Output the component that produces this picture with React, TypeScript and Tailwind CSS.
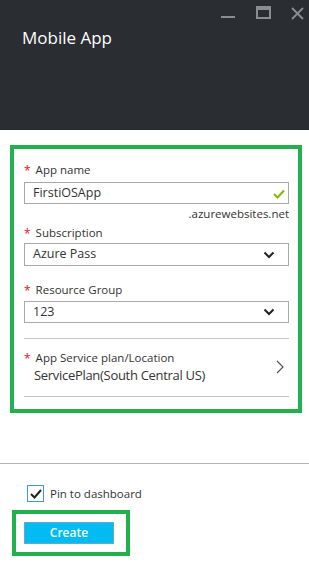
import React from "react";

const font = { fontFamily: '"Segoe UI", "Open Sans", "Noto Sans", sans-serif' };

function Star() {
  return <span className="text-[#e81123] text-[12px] mr-[5px] relative top-[1px]">*</span>;
}

function ChevronDown() {
  return (
    <svg width="12" height="8" viewBox="0 0 12 8" className="absolute right-[13px] top-1/2 -translate-y-1/2">
      <path d="M1.5 1.5 L6 6 L10.5 1.5" fill="none" stroke="#222" strokeWidth="2" />
    </svg>
  );
}

export default function App() {
  return (
    <div className="w-[309px] h-[565px] bg-white flex flex-col text-[#333]" style={font}>
      <div className="h-[130px] bg-[#2a2d31] relative shrink-0">
        <div className="text-white text-[17px] pl-[22px] pt-[26px] leading-[24px]">Mobile App</div>
        <svg width="14" height="4" viewBox="0 0 14 4" className="absolute left-[221px] top-[16px]">
          <rect x="0" y="0" width="14" height="2" fill="#8b8d90" />
        </svg>
        <svg width="15" height="13" viewBox="0 0 15 13" className="absolute left-[256px] top-[6px]">
          <rect x="1" y="1" width="13" height="11" fill="none" stroke="#8b8d90" strokeWidth="2" />
          <rect x="1" y="1" width="13" height="3" fill="#8b8d90" />
        </svg>
        <svg width="13" height="13" viewBox="0 0 13 13" className="absolute left-[291px] top-[7px]">
          <path d="M1 1 L12 12 M12 1 L1 12" stroke="#8b8d90" strokeWidth="1.8" />
        </svg>
      </div>

      <div className="pt-[15px] pl-[10px] pr-[7px]">
        <div className="h-[268px] border-[4px] border-[#22b14c] pl-[10px] pr-[9px]">
          <div className="mt-[12px] h-[17px] text-[11.5px] leading-[17px] flex items-center">
            <Star />App name
          </div>
          <div className="mt-[4px] h-[22px] border border-[#a9a9a9] relative flex items-center pl-[8px] text-[12.5px]">
            FirstiOSApp
            <svg width="12" height="10" viewBox="0 0 12 10" className="absolute right-[3px] top-[6px]">
              <path d="M1 5 L4.5 8.5 L11 1.5" fill="none" stroke="#7fba00" strokeWidth="2" />
            </svg>
          </div>
          <div className="h-[17px] mt-[1px] text-right text-[11.5px] leading-[17px]">.azurewebsites.net</div>
          <div className="mt-[2px] h-[17px] text-[11.5px] leading-[17px] flex items-center">
            <Star />Subscription
          </div>
          <div className="mt-[2px] h-[23px] border border-[#a9a9a9] relative flex items-center pl-[8px] text-[12.5px]">
            Azure Pass
            <ChevronDown />
          </div>
          <div className="mt-[15px] h-[17px] text-[11.5px] leading-[17px] flex items-center">
            <Star />Resource Group
          </div>
          <div className="mt-[3px] h-[22px] border border-[#a9a9a9] relative flex items-center pl-[8px] text-[12.5px]">
            123
            <ChevronDown />
          </div>
          <div className="mt-[15px] border-t border-[#c4c4c4]" />
          <div className="relative">
            <div className="mt-[10px] h-[17px] text-[11.5px] leading-[17px] flex items-center">
              <Star />App Service plan/Location
            </div>
            <div className="h-[19px] pl-[10px] text-[13px] tracking-[-0.3px] leading-[19px]">ServicePlan(South Central US)</div>
            <svg width="8" height="14" viewBox="0 0 8 14" className="absolute right-[5px] top-[11px]">
              <path d="M1 1 L7 7 L1 13" fill="none" stroke="#555" strokeWidth="1.2" />
            </svg>
          </div>
          <div className="mt-[11px] border-t border-[#c4c4c4]" />
        </div>
      </div>

      <div className="mt-[50px] border-t border-[#b5b5b5]" />

      <div className="pl-[27px] mt-[21px] flex items-center h-[17px]">
        <div className="w-[17px] h-[17px] border border-[#3d9bd1] flex items-center justify-center bg-white">
          <svg width="12" height="10" viewBox="0 0 12 10">
            <path d="M1 5 L4.5 8.5 L11 1" fill="none" stroke="#222" strokeWidth="2" />
          </svg>
        </div>
        <span className="ml-[6px] text-[11.5px] leading-[17px]">Pin to dashboard</span>
      </div>

      <div className="pl-[12px] mt-[8px]">
        <div className="w-[118px] h-[46px] border-[4px] border-[#22b14c] pl-[8px] pt-[8px]">
          <div className="w-[90px] h-[22px] bg-[#00bcf2] border border-[#6aa9c4] flex items-center justify-center text-white text-[12px] font-semibold">
            Create
          </div>
        </div>
      </div>
    </div>
  );
}
